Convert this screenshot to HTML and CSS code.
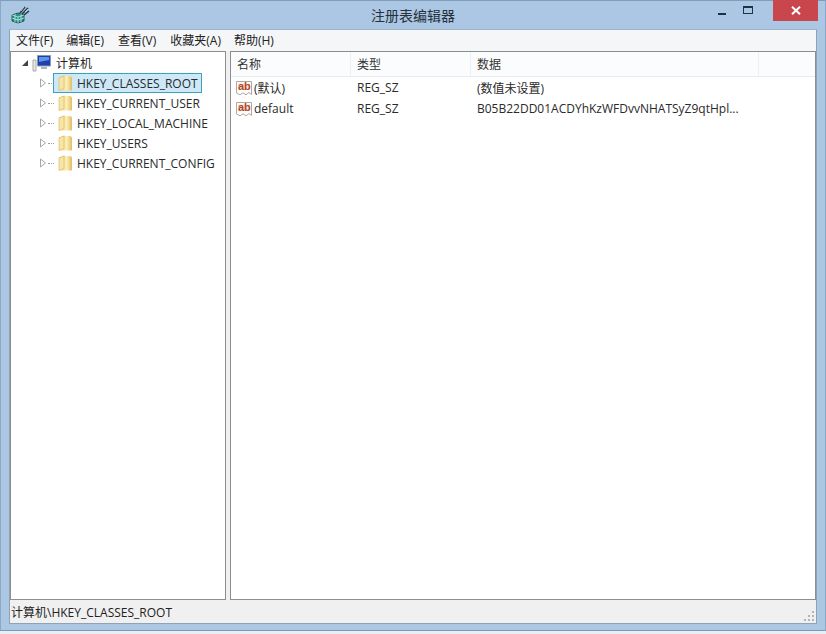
FILE: index.html
```html
<!DOCTYPE html>
<html lang="zh-CN">
<head>
<meta charset="utf-8">
<title>注册表编辑器</title>
<link rel="stylesheet" href="styles.css">
</head>
<body>
<svg class="defs" width="0" height="0" aria-hidden="true">
  <defs>
    <linearGradient id="fold" x1="0" x2="1" y1="0" y2="0">
      <stop offset="0" stop-color="#f3dc8e"/><stop offset=".55" stop-color="#fbeeb8"/><stop offset="1" stop-color="#e2bc62"/>
    </linearGradient>
    <symbol id="folder" viewBox="0 0 16 18">
      <path d="M2 3.5 8 1.5V15L2 16.5Z" fill="#e6c56f"/>
      <path d="M7 2H13.5L15 3.5V16.5H3.5L7 14.5Z" fill="url(#fold)"/>
      <path d="M2 4 7 2V14.5L2 16.5Z" fill="#f6e7a8" stroke="#d9b45c" stroke-width=".6"/>
    </symbol>
    <symbol id="ab" viewBox="0 0 18 18">
      <path d="M1.5 2.5H16.5V15.5L14 13.5 11 15.8 8 13.8 5 15.8 1.5 14Z" fill="#fff" stroke="#b3a6a0"/>
      <path d="M3 4.5H15V10.5H3Z" fill="#f3e2da"/>
    </symbol>
    <symbol id="arrow" viewBox="0 0 8 10">
      <path d="M1.5 1 6.5 5 1.5 9Z" fill="#fff" stroke="#a6a6a6"/>
    </symbol>
  </defs>
</svg>
<div class="window">
  <header class="titlebar">
    <svg class="appicon" width="20" height="20" viewBox="0 0 20 20" aria-hidden="true">
      <path d="M2 11 8 9 14 11V17L8 19 2 17Z" fill="#2f8f8a" stroke="#17403f" stroke-width=".8"/>
      <path d="M2 11 8 13V19M8 13 14 11M5 10V18M11 10V18M2 14 8 16 14 14" fill="none" stroke="#b9f0e6" stroke-width=".8"/>
      <path d="M10 9 15 3M12 10 18 4M14 11 19 7" stroke="#1d3b45" stroke-width="1.6" fill="none"/>
      <path d="M11 7 14 3M15 8 18 5" stroke="#d6e6ee" stroke-width=".7" fill="none"/>
    </svg>
    <h1 class="title">注册表编辑器</h1>
    <div class="controls">
      <span class="ctl ctl-min"><i class="min-glyph"></i></span>
      <span class="ctl ctl-max"><i class="max-glyph"></i></span>
      <span class="ctl ctl-close">
        <svg width="10" height="9" viewBox="0 0 10 9" aria-hidden="true"><path d="M1 .8 9 8.2M9 .8 1 8.2" stroke="#fff" stroke-width="2" fill="none"/></svg>
      </span>
    </div>
  </header>
  <div class="client">
    <nav class="menubar">
      <span class="menu m1">文件(F)</span>
      <span class="menu m2">编辑(E)</span>
      <span class="menu m3">查看(V)</span>
      <span class="menu m4">收藏夹(A)</span>
      <span class="menu">帮助(H)</span>
    </nav>
    <div class="panes">
      <aside class="tree">
        <div class="node root">
          <svg class="expander" width="8" height="8" viewBox="0 0 8 8" aria-hidden="true"><path d="M7 1V7H1Z" fill="#444"/></svg>
          <svg class="computer" width="20" height="18" viewBox="0 0 20 18" aria-hidden="true">
            <path d="M1 6H4V17H1Z" fill="#e8e8e8" stroke="#9a9a9a" stroke-width=".8"/>
            <path d="M5.5 1.5H18.5V12H5.5Z" fill="#1d3fb0" stroke="#8a99ad"/>
            <path d="M7 3H17V6L7 8Z" fill="#5f95e6"/>
            <path d="M9 13H15V15H9Z" fill="#aab6c4"/>
          </svg>
          <span class="label">计算机</span>
        </div>
        <div class="node"><svg class="arrow"><use href="#arrow"/></svg><i class="dots"></i><span class="item selected"><svg class="folder"><use href="#folder"/></svg><span class="label">HKEY_CLASSES_ROOT</span></span></div>
        <div class="node"><svg class="arrow"><use href="#arrow"/></svg><i class="dots"></i><span class="item"><svg class="folder"><use href="#folder"/></svg><span class="label">HKEY_CURRENT_USER</span></span></div>
        <div class="node"><svg class="arrow"><use href="#arrow"/></svg><i class="dots"></i><span class="item"><svg class="folder"><use href="#folder"/></svg><span class="label">HKEY_LOCAL_MACHINE</span></span></div>
        <div class="node"><svg class="arrow"><use href="#arrow"/></svg><i class="dots"></i><span class="item"><svg class="folder"><use href="#folder"/></svg><span class="label">HKEY_USERS</span></span></div>
        <div class="node"><svg class="arrow"><use href="#arrow"/></svg><i class="dots"></i><span class="item"><svg class="folder"><use href="#folder"/></svg><span class="label">HKEY_CURRENT_CONFIG</span></span></div>
      </aside>
      <main class="list">
        <div class="row head">
          <span class="col c-name">名称</span>
          <span class="col c-type">类型</span>
          <span class="col c-data">数据</span>
          <span class="col c-rest"></span>
        </div>
        <div class="row entry">
          <span class="col c-name"><span class="ab"><svg class="abbg"><use href="#ab"/></svg><b class="abtext">ab</b></span>(默认)</span>
          <span class="col c-type">REG_SZ</span>
          <span class="col c-data">(数值未设置)</span>
        </div>
        <div class="row entry">
          <span class="col c-name"><span class="ab"><svg class="abbg"><use href="#ab"/></svg><b class="abtext">ab</b></span>default</span>
          <span class="col c-type">REG_SZ</span>
          <span class="col c-data">B05B22DD01ACDYhKzWFDvvNHATSyZ9qtHpl...</span>
        </div>
      </main>
    </div>
    <footer class="status">
      <span>计算机\HKEY_CLASSES_ROOT</span>
      <svg class="grip" width="12" height="12" viewBox="0 0 12 12" aria-hidden="true">
        <path d="M9 1h2v2H9zM5 5h2v2H5zM9 5h2v2H9zM1 9h2v2H1zM5 9h2v2H5zM9 9h2v2H9z" fill="#b4b4b4"/>
      </svg>
    </footer>
  </div>
</div>
</body>
</html>
```
FILE: styles.css
```css
* { box-sizing: border-box; }
html, body { margin: 0; padding: 0; }
body {
  width: 826px;
  height: 634px;
  overflow: hidden;
  background: #e9eef3;
  font-family: "Open Sans", "Noto Sans CJK SC", sans-serif;
  font-size: 12px;
  color: #2a2a2a;
}
.defs { position: absolute; }
.window {
  width: 826px;
  height: 631px;
  background: #abc7e3;
  border-top: 1px solid #7f9db9;
  border-left: 1px solid #8aa7c4;
  border-right: 1px solid #8aa7c4;
  border-bottom: 1px solid #7e99b5;
  display: flex;
  flex-direction: column;
  padding: 0 8px 6px 8px;
}
.titlebar {
  height: 29px;
  flex: none;
  display: flex;
  align-items: center;
  position: relative;
}
.appicon { margin: 0 0 3px 1px; }
.title {
  position: absolute;
  left: 0;
  right: 0;
  top: 6px;
  margin: 0;
  text-align: center;
  font-weight: 400;
  font-size: 14px;
  line-height: 18px;
  color: #25303c;
}
.controls {
  position: absolute;
  top: -1px;
  right: -1px;
  height: 21px;
  display: flex;
}
.ctl { display: flex; align-items: center; justify-content: center; height: 21px; }
.ctl-min { width: 26px; }
.ctl-max { width: 26px; margin-right: 12px; }
.ctl-close { width: 45px; background: #c9474c; }
.min-glyph { display: block; width: 8px; height: 2px; background: #1e3246; margin-top: 6px; }
.max-glyph { display: block; width: 10px; height: 8px; border: 1px solid #1e3246; border-top-width: 2px; margin-bottom: 1px; }
.client {
  flex: 1;
  min-height: 0;
  display: flex;
  flex-direction: column;
  background: #f0f0f0;
  border: 1px solid #8fa3b8;
  border-width: 0 1px 1px 1px;
  box-shadow: 0 -1px 0 #9db4cc;
}
.menubar {
  height: 21px;
  flex: none;
  display: flex;
  align-items: center;
  padding-left: 6px;
  background: #f4f6f7;
  color: #222;
}
.menu { line-height: 20px; }
.m1 { margin-right: 13px; }
.m2 { margin-right: 14px; }
.m3 { margin-right: 14px; }
.m4 { margin-right: 13px; }
.panes {
  flex: 1;
  min-height: 0;
  display: flex;
  gap: 4px;
}
.tree {
  width: 216px;
  flex: none;
  background: #fff;
  border: 1px solid #8e8e8e;
  border-width: 1px 1px 1px 1px;
  padding: 1px 0 0 8px;
}
.node {
  height: 20px;
  display: flex;
  align-items: center;
  white-space: nowrap;
}
.root .expander { margin: 0 3px 0 2px; }
.computer { margin-right: 4px; }
.root .label { color: #222; }
.arrow { width: 8px; height: 10px; margin-left: 20px; flex: none; }
.dots {
  width: 6px;
  margin: 0 0 0 1px;
  border-top: 1px dotted #9a9a9a;
}
.item {
  display: flex;
  align-items: center;
  height: 20px;
  padding: 0 3px 0 3px;
  border: 1px solid transparent;
  margin-left: -1px;
}
.item.selected { background: #cde8f7; border-color: #3fa0bd; }
.folder { width: 16px; height: 18px; margin-right: 4px; flex: none; }
.label { letter-spacing: 0; }
.list {
  flex: 1;
  min-width: 0;
  background: #fff;
  border: 1px solid #8e8e8e;
}
.row { display: flex; align-items: center; }
.head {
  height: 25px;
  background: #fbfcfd;
  border-bottom: 1px solid #e8ecf0;
  color: #333;
}
.entry { height: 21px; }
.col { padding-left: 6px; white-space: nowrap; display: flex; align-items: center; }
.c-name { width: 120px; }
.c-type { width: 120px; }
.c-data { width: 288px; }
.head .col { height: 24px; border-right: 1px solid #eceff3; }
.c-rest { flex: 1; }
.head .c-rest { border-right: 0; }
.entry .c-name { padding-left: 4px; }
.ab {
  position: relative;
  width: 18px;
  height: 18px;
  margin-right: 1px;
  flex: none;
}
.abbg { width: 18px; height: 18px; display: block; }
.abtext {
  position: absolute;
  left: 3px;
  top: 0;
  line-height: 15px;
  font-size: 11px;
  font-family: "Liberation Sans", sans-serif;
  font-weight: 700;
  color: #b5472a;
}
.status {
  height: 23px;
  flex: none;
  display: flex;
  align-items: center;
  justify-content: space-between;
  padding: 0 1px 0 1px;
  background: #f0f0f0;
  color: #222;
}
.grip { align-self: flex-end; margin-bottom: 1px; }
```
